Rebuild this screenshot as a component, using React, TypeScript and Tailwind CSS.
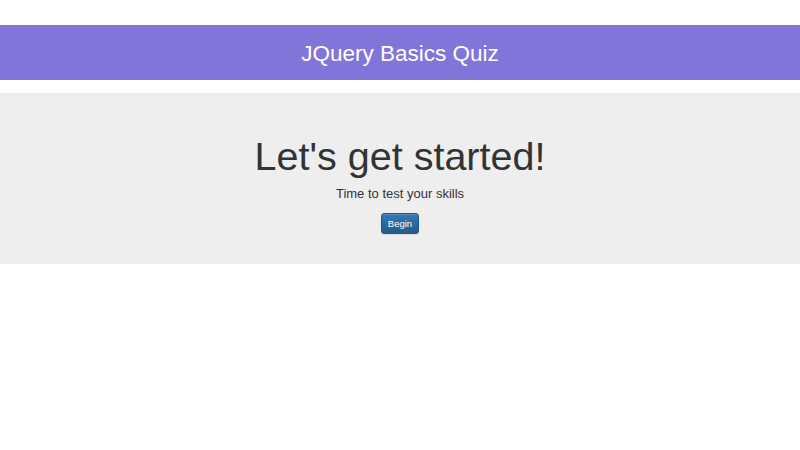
export default function App() {
  return (
    <div className="min-h-[450px] bg-white pt-[25px] font-['Liberation_Sans',Arial,sans-serif] text-[#333]">
      {/* Title bar */}
      <header className="flex h-[55px] items-center justify-center bg-[#8175d9] pt-[3px]">
        <h1 className="text-[22.5px] leading-none text-white">JQuery Basics Quiz</h1>
      </header>

      {/* Intro panel */}
      <section className="mt-[13px] flex h-[171px] flex-col items-center bg-[#eeeeee] pt-[41px]">
        <h2 className="text-[39.5px] leading-[44px] text-[#333]">Let's get started!</h2>
        <p className="mt-[6px] text-[13px] leading-[20px]">Time to test your skills</p>
        <button className="mt-[9px] h-[21px] rounded-[3px] border border-[#245580] bg-gradient-to-b from-[#337ab7] to-[#265a88] px-[6px] text-[9.5px] leading-none text-white shadow-[inset_0_1px_0_rgba(255,255,255,0.15),0_1px_1px_rgba(0,0,0,0.075)]">
          Begin
        </button>
      </section>
    </div>
  );
}
